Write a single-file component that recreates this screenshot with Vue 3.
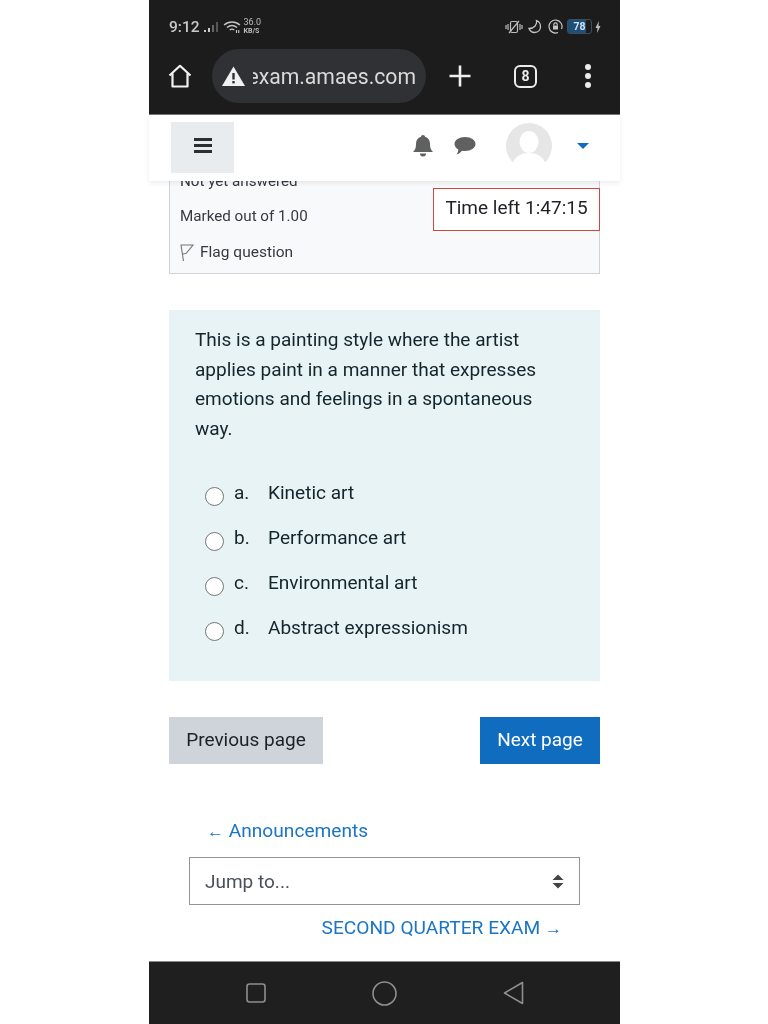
<template>
  <div class="page">
    <div class="phone">
      <header class="chrome">
        <div class="status">
          <span class="clock">9:12</span>
          <svg class="signal" width="16" height="12" viewBox="0 0 16 12">
            <rect x="1" y="9" width="2" height="2" fill="#ccc" />
            <rect x="5" y="7" width="2" height="4" fill="#ccc" />
            <rect x="9" y="4" width="2" height="7" fill="#666" />
            <rect x="13" y="1" width="2" height="10" fill="#555" />
          </svg>
          <svg class="wifi" width="18" height="14" viewBox="0 0 16 14" preserveAspectRatio="none" fill="none" stroke="#c4c4c4" stroke-width="1.3">
            <path d="M1 5c4-4 10-4 14 0" />
            <path d="M3.5 7.5c3-2.6 6-2.6 9 0" />
            <path d="M6 10c1.500-1.300 2.500-1.300 4 0" />
            <path d="M12 13v-3M14 13v-3" stroke-width="1" />
          </svg>
          <div class="speed"><span>36.0</span><span class="unit">KB/S</span></div>
          <div class="status-right">
            <svg width="20" height="14" viewBox="0 0 20 14" fill="none" stroke="#bdbdbd" stroke-width="1.200">
              <rect x="6.500" y="1.500" width="7" height="11" rx="1.500" />
              <path d="M4 4v6M2 5v4M16 4v6M18 5v4M5 13L15 1" />
            </svg>
            <svg width="15" height="15" viewBox="0 0 15 15" fill="none" stroke="#c4c4c4" stroke-width="1.300">
              <path d="M9.500 1.500c1 4-2 8-7.500 8 1 2.500 3 4 5.500 4 4 0 6-3 6-6 0-2.500-1.500-5-4-6z" />
            </svg>
            <svg class="lock" width="15" height="15" viewBox="0 0 15 15" fill="none" stroke="#c4c4c4" stroke-width="1.200">
              <path d="M13.500 10A6.500 6.500 0 1 0 10 13.500" />
              <rect x="5" y="6.500" width="5" height="4" fill="#c4c4c4" stroke="none" />
              <path d="M5.800 6.500V5.500a1.700 1.700 0 0 1 3.400 0v1" />
            </svg>
            <div class="battery"><span>78</span></div>
            <svg width="6" height="12" viewBox="0 0 6 12"><path d="M3.800 0L0.500 7h2L2 12l3.500-7h-2z" fill="#bdbdbd" /></svg>
          </div>
        </div>
        <div class="toolbar">
          <svg class="home" width="24" height="24" viewBox="0 0 24 24" fill="none" stroke="#f2f2f2" stroke-width="2.200" stroke-linejoin="round">
            <path d="M1.500 11.500L12 1.800l10.500 9.700M4.500 9.500V22.500h15V9.500" />
          </svg>
          <div class="omnibox">
            <svg width="23" height="20" viewBox="0 0 23 20">
              <path d="M11.500 0.500L23 20H0z" fill="#f1f1f1" />
              <rect x="10.300" y="7" width="2.400" height="6.500" fill="#303134" />
              <rect x="10.300" y="15" width="2.400" height="2.400" fill="#303134" />
            </svg>
            <div class="url"><span>exam.amaes.com</span></div>
          </div>
          <svg class="plus" width="22" height="22" viewBox="0 0 22 22" stroke="#efefef" stroke-width="2.600">
            <path d="M11 0.500V21.500M0.500 11H21.500" />
          </svg>
          <div class="tabs">8</div>
          <div class="dots"><i></i><i></i><i></i></div>
        </div>
      </header>

      <nav class="navbar">
        <button class="burger"><i></i><i></i><i></i></button>
        <div class="nav-right">
          <svg width="22" height="24" viewBox="0 0 22 24">
            <path d="M11 1c1.200 0 2 .8 2 1.800 3.500 1 5 3.700 5 7.200 0 4 1 6 3 8H1c2-2 3-4 3-8 0-3.500 1.500-6.200 5-7.200C9 1.800 9.800 1 11 1z" fill="#5f6161" />
            <path d="M8 19.500h6a3 3 0 0 1-6 0z" fill="#5f6161" />
          </svg>
          <svg class="chat" width="22" height="20" viewBox="0 0 22 20">
            <path d="M11 1c5.800 0 10.500 2.900 10.500 7s-4.700 7-10.500 7c-1 0-2-.1-3-.3C6.500 16.500 4.500 18 2.500 18.500c1-1.300 1.700-3 1.800-5C2 12.200.500 10.200.500 8 .500 3.900 5.200 1 11 1z" fill="#5f6161" />
          </svg>
          <div class="avatar">
            <svg width="46" height="46" viewBox="0 0 46 46">
              <circle cx="23" cy="23" r="23" fill="#e6e6e6" />
              <ellipse cx="23" cy="19" rx="9.500" ry="11" fill="#fff" />
              <path d="M6 41c3-8 10-11 17-11s14 3 17 11a23 23 0 0 1-34 0z" fill="#fff" />
            </svg>
          </div>
          <span class="caret"></span>
        </div>
      </nav>

      <main class="content">
        <section class="info">
          <div class="info-state">Not yet answered</div>
          <div class="info-mark">Marked out of 1.00</div>
          <div class="info-flag">
            <svg width="14" height="19" viewBox="0 0 14 19" fill="none" stroke="#777" stroke-width="1.100">
              <path d="M3.500 18L1 2h12L6 10.500 2.500 11" />
            </svg>
            Flag question
          </div>
          <div class="timer">Time left 1:47:15</div>
        </section>

        <section class="question">
          <p>This is a painting style where the artist applies paint in a manner that expresses emotions and feelings in a spontaneous way.</p>
          <div class="answers">
            <label v-for="a in answers" :key="a.key" class="answer">
              <span class="radio"></span>
              <span class="letter">{{ a.key }}.</span>
              <span>{{ a.text }}</span>
            </label>
          </div>
        </section>

        <div class="paging">
          <button class="btn prev">Previous page</button>
          <button class="btn next">Next page</button>
        </div>

        <div class="activity">
          <a class="link back"><span class="arrow">←</span> Announcements</a>
          <div class="jump">
            <span>Jump to...</span>
            <svg width="12" height="15" viewBox="0 0 12 15" fill="#444">
              <path d="M6 0.500L11.500 6H0.500z" />
              <path d="M6 14.500L0.500 9H11.500z" />
            </svg>
          </div>
          <a class="link forward">SECOND QUARTER EXAM <span class="arrow">→</span></a>
        </div>
      </main>

      <footer class="softkeys">
        <svg width="20" height="20" viewBox="0 0 20 20" fill="none" stroke="#8e8e8e" stroke-width="1.600"><rect x="1" y="1" width="18" height="18" rx="2.500" /></svg>
        <svg width="25" height="25" viewBox="0 0 25 25" fill="none" stroke="#8e8e8e" stroke-width="1.600"><circle cx="12.500" cy="12.500" r="11.500" /></svg>
        <svg width="21" height="24" viewBox="0 0 21 24" fill="none" stroke="#8e8e8e" stroke-width="1.600" stroke-linejoin="round"><path d="M19.500 1.500V22.500L1.500 12z" /></svg>
      </footer>
    </div>
  </div>
</template>

<script setup>
const answers = [
  { key: "a", text: "Kinetic art" },
  { key: "b", text: "Performance art" },
  { key: "c", text: "Environmental art" },
  { key: "d", text: "Abstract expressionism" },
];
</script>

<style>
html, body { margin: 0; background: #fff; }
</style>

<style scoped>
.page { display: flex; justify-content: center; height: 1024px; overflow: hidden; font-family: Roboto, "Liberation Sans", sans-serif; }
.phone { width: 471px; height: 1024px; display: flex; flex-direction: column; background: #fff; margin-left: 1px; filter: blur(0.35px); }

.chrome { height: 115px; flex: none; box-sizing: border-box; background: #1c1c1c; border-bottom: 1px solid #777; }
.status { height: 49px; display: flex; align-items: center; padding: 4px 19px 0 20px; box-sizing: border-box; color: #c9c9c9; }
.clock { font-size: 15.500px; font-weight: 500; }
.signal { margin-left: 3px; }
.wifi { margin-left: 4px; }
.speed { display: flex; flex-direction: column; margin-left: 3px; font-size: 9px; line-height: 9px; color: #bdbdbd; }
.unit { font-size: 7px; font-weight: 700; }
.status-right { display: flex; align-items: center; gap: 3px; margin-left: auto; }
.lock { margin-left: 3px; }
.battery { width: 23px; height: 13px; margin: 0 0 0 1px; border: 1px solid #3c4c58; border-radius: 3px; background: linear-gradient(90deg, #1d4f77 78%, #1c1c1c 78%); color: #cfe3f3; font-size: 10.500px; font-weight: 700; line-height: 13px; text-align: center; }

.toolbar { height: 54px; display: flex; align-items: center; padding-left: 19px; }
.omnibox { width: 214px; height: 54px; margin-left: 20px; display: flex; align-items: center; gap: 8px; padding-left: 10px; box-sizing: border-box; border-radius: 27px; background: #303134; }
.url { width: 163px; overflow: hidden; color: #dadada; font-size: 21.200px; white-space: nowrap; display: flex; justify-content: flex-end; }
.plus { margin-left: 23px; }
.tabs { width: 19px; height: 19px; margin-left: 43px; border: 2px solid #ececec; border-radius: 6px; color: #ececec; font-size: 14px; font-weight: 700; line-height: 19px; text-align: center; }
.dots { display: flex; flex-direction: column; gap: 3px; margin-left: 48px; }
.dots i { width: 6px; height: 6px; border-radius: 50%; background: #ececec; }

.navbar { height: 66px; flex: none; position: relative; z-index: 2; display: flex; align-items: center; padding: 0 31px 0 22px; box-sizing: border-box; background: #fff; box-shadow: 0 2px 5px rgba(0,0,0,.08); }
.burger { width: 63px; height: 51px; margin-top: -1px; display: flex; flex-direction: column; justify-content: center; align-items: center; gap: 3px; padding: 0 0 5px; border: 0; background: #e9ecef; }
.burger i { width: 18px; height: 3px; background: #2b2f33; }
.nav-right { display: flex; align-items: center; margin-left: auto; margin-top: -4px; }
.chat { margin-left: 20px; }
.avatar { margin-left: 30px; height: 46px; }
.caret { margin-left: 25px; border-left: 6px solid transparent; border-right: 6px solid transparent; border-top: 6px solid #0f6cbf; }

.content { flex: 1; min-height: 0; overflow: hidden; padding: 0 20px; color: #1d2125; }
.info { position: relative; display: flow-root; height: 92px; border: 1px solid #ced4da; border-top: 0; background: #f8f9fa; font-size: 15.200px; color: #343a40; padding-left: 10px; }
.info-state { margin-top: -8px; line-height: 16px; }
.info-mark { margin-top: 19px; line-height: 17px; }
.info-flag { display: flex; align-items: center; gap: 6px; margin-top: 18px; font-size: 15.500px; line-height: 19px; }
.timer { position: absolute; top: 7px; right: -1px; width: 167px; height: 43px; box-sizing: border-box; border: 1px solid #cf4a3c; background: #fff; color: #1d2125; font-size: 19px; line-height: 37px; text-align: center; }

.question { margin-top: 36px; height: 371px; padding: 15px 26px 0; box-sizing: border-box; background: #e7f3f5; color: #14262b; }
.question p { margin: 0; max-width: 360px; font-size: 19.050px; line-height: 29.500px; }
.answers { margin-top: 27px; padding-left: 10px; }
.answer { height: 45px; display: flex; align-items: center; font-size: 19.050px; }
.radio { width: 17px; height: 17px; margin-top: 7px; border: 1px solid #767676; border-radius: 50%; background: #fff; }
.letter { width: 34px; margin-left: 10px; }

.paging { margin-top: 36px; display: flex; justify-content: space-between; }
.btn { height: 47px; border: 0; padding: 0 0 2px; font-family: inherit; font-size: 19px; }
.prev { width: 154px; background: #ced4da; color: #1d2125; }
.next { width: 120px; background: #0f6cbf; color: #fff; }

.activity { margin-top: 52px; padding: 0 20px; font-size: 19px; }
.link { display: block; color: #1b75c4; font-size: 19.150px; }
.arrow { font-size: 17px; }
.back { padding-left: 18px; line-height: 29px; }
.jump { height: 48px; margin-top: 11px; display: flex; align-items: center; justify-content: space-between; padding: 0 15px; box-sizing: border-box; border: 1px solid #8f959e; color: #495057; }
.forward { margin-top: 9px; padding-right: 18px; text-align: right; line-height: 28px; }

.softkeys { height: 63px; flex: none; display: flex; align-items: center; gap: 106px; padding-left: 97px; box-sizing: border-box; border-top: 1px solid #8a8a8a; background: #1f1f1f; }
</style>
